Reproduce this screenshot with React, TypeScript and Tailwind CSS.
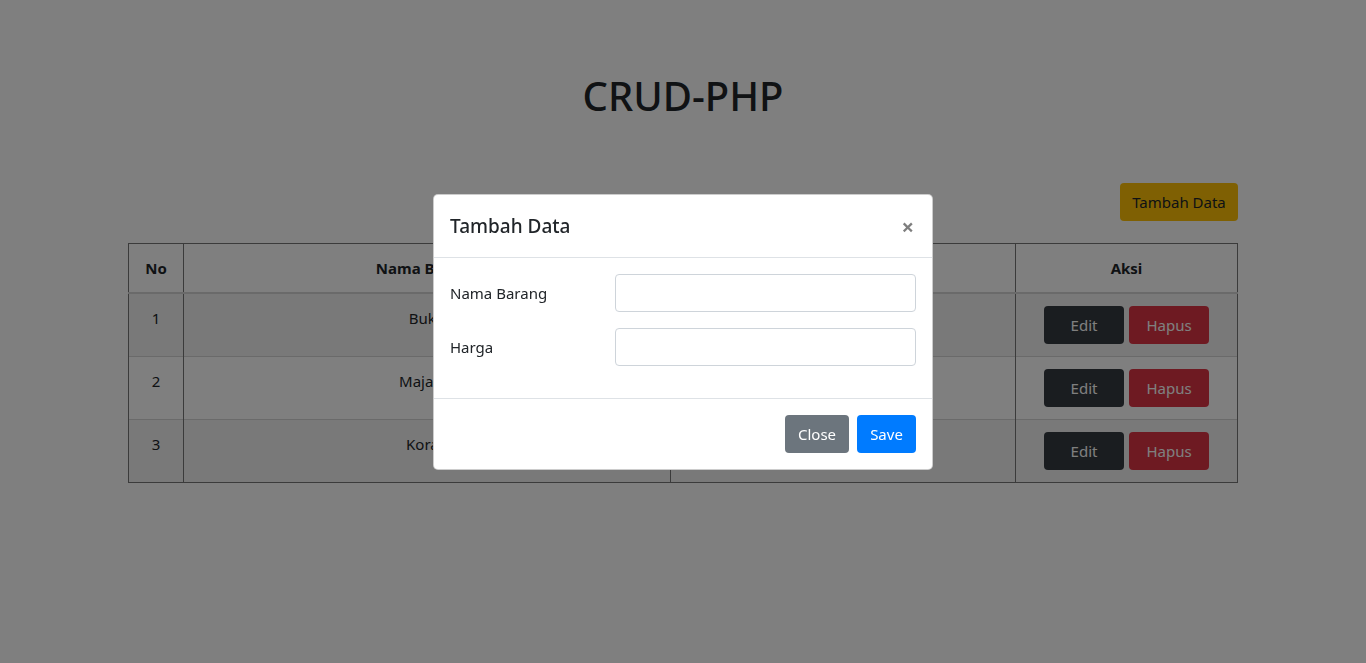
const items = [
  { no: 1, nama: 'Buku', harga: '5000' },
  { no: 2, nama: 'Majalah', harga: '10000' },
  { no: 3, nama: 'Koran', harga: '3000' },
]

export default function App() {
  return (
    <div className="min-h-[663px] bg-white font-['Noto_Sans','Open_Sans',sans-serif] text-[15px] leading-6 text-[#212529]">
      <div className="mx-auto max-w-[1140px] px-[15px] pt-[72px]">
        <h1 className="text-center text-[40px] font-medium leading-[48px]">CRUD-PHP</h1>
        <div className="mt-[63px] flex justify-end">
          <button className="h-[38px] w-[118px] rounded-[4px] bg-[#ffc107] text-[#212529]">Tambah Data</button>
        </div>
        <table className="mt-[22px] w-full border-collapse border border-[#777] text-center">
          <thead>
            <tr className="border-b-2 border-[#d4d4d4]">
              <th className="w-[55px] border-x border-[#777] p-3 font-bold">No</th>
              <th className="w-[487px] border-x border-[#777] p-3 font-bold">Nama Barang</th>
              <th className="w-[345px] border-x border-[#777] p-3 font-bold">Harga</th>
              <th className="border-x border-[#777] p-3 font-bold">Aksi</th>
            </tr>
          </thead>
          <tbody>
            {items.map((it) => (
              <tr key={it.no} className={`border-t border-[#d4d4d4] ${it.no % 2 ? 'bg-[#f2f2f2]' : ''}`}>
                <td className="border-x border-[#777] p-3 align-top">{it.no}</td>
                <td className="border-x border-[#777] p-3 align-top">{it.nama}</td>
                <td className="border-x border-[#777] p-3 align-top">{it.harga}</td>
                <td className="border-x border-[#777] p-3 align-top">
                  <div className="flex justify-center gap-[5px]">
                    <button className="h-[38px] w-[80px] rounded-[4px] bg-[#343a40] text-white">Edit</button>
                    <button className="h-[38px] w-[80px] rounded-[4px] bg-[#dc3545] text-white">Hapus</button>
                  </div>
                </td>
              </tr>
            ))}
          </tbody>
        </table>
      </div>

      {/* backdrop + modal */}
      <div className="fixed inset-0 bg-black/50" />
      <div className="fixed inset-0 flex items-center justify-center">
        <div className="w-[500px] rounded-[5px] border border-black/20 bg-white">
          <div className="flex items-start justify-between border-b border-[#dee2e6] p-4">
            <h5 className="text-[19px] font-medium leading-[30px]">Tambah Data</h5>
            <button className="mr-[2px] text-[22px] font-bold leading-[30px] text-black opacity-50">×</button>
          </div>
          <div className="p-4">
            <div className="mb-4 grid grid-cols-[165px_1fr] items-center">
              <label>Nama Barang</label>
              <input className="h-[38px] rounded-[4px] border border-[#ced4da] px-3" />
            </div>
            <div className="mb-4 grid grid-cols-[165px_1fr] items-center">
              <label>Harga</label>
              <input className="h-[38px] rounded-[4px] border border-[#ced4da] px-3" />
            </div>
          </div>
          <div className="flex justify-end gap-2 border-t border-[#dee2e6] p-4">
            <button className="h-[38px] w-[64px] rounded-[4px] bg-[#6c757d] text-white">Close</button>
            <button className="h-[38px] w-[59px] rounded-[4px] bg-[#007bff] text-white">Save</button>
          </div>
        </div>
      </div>
    </div>
  )
}
